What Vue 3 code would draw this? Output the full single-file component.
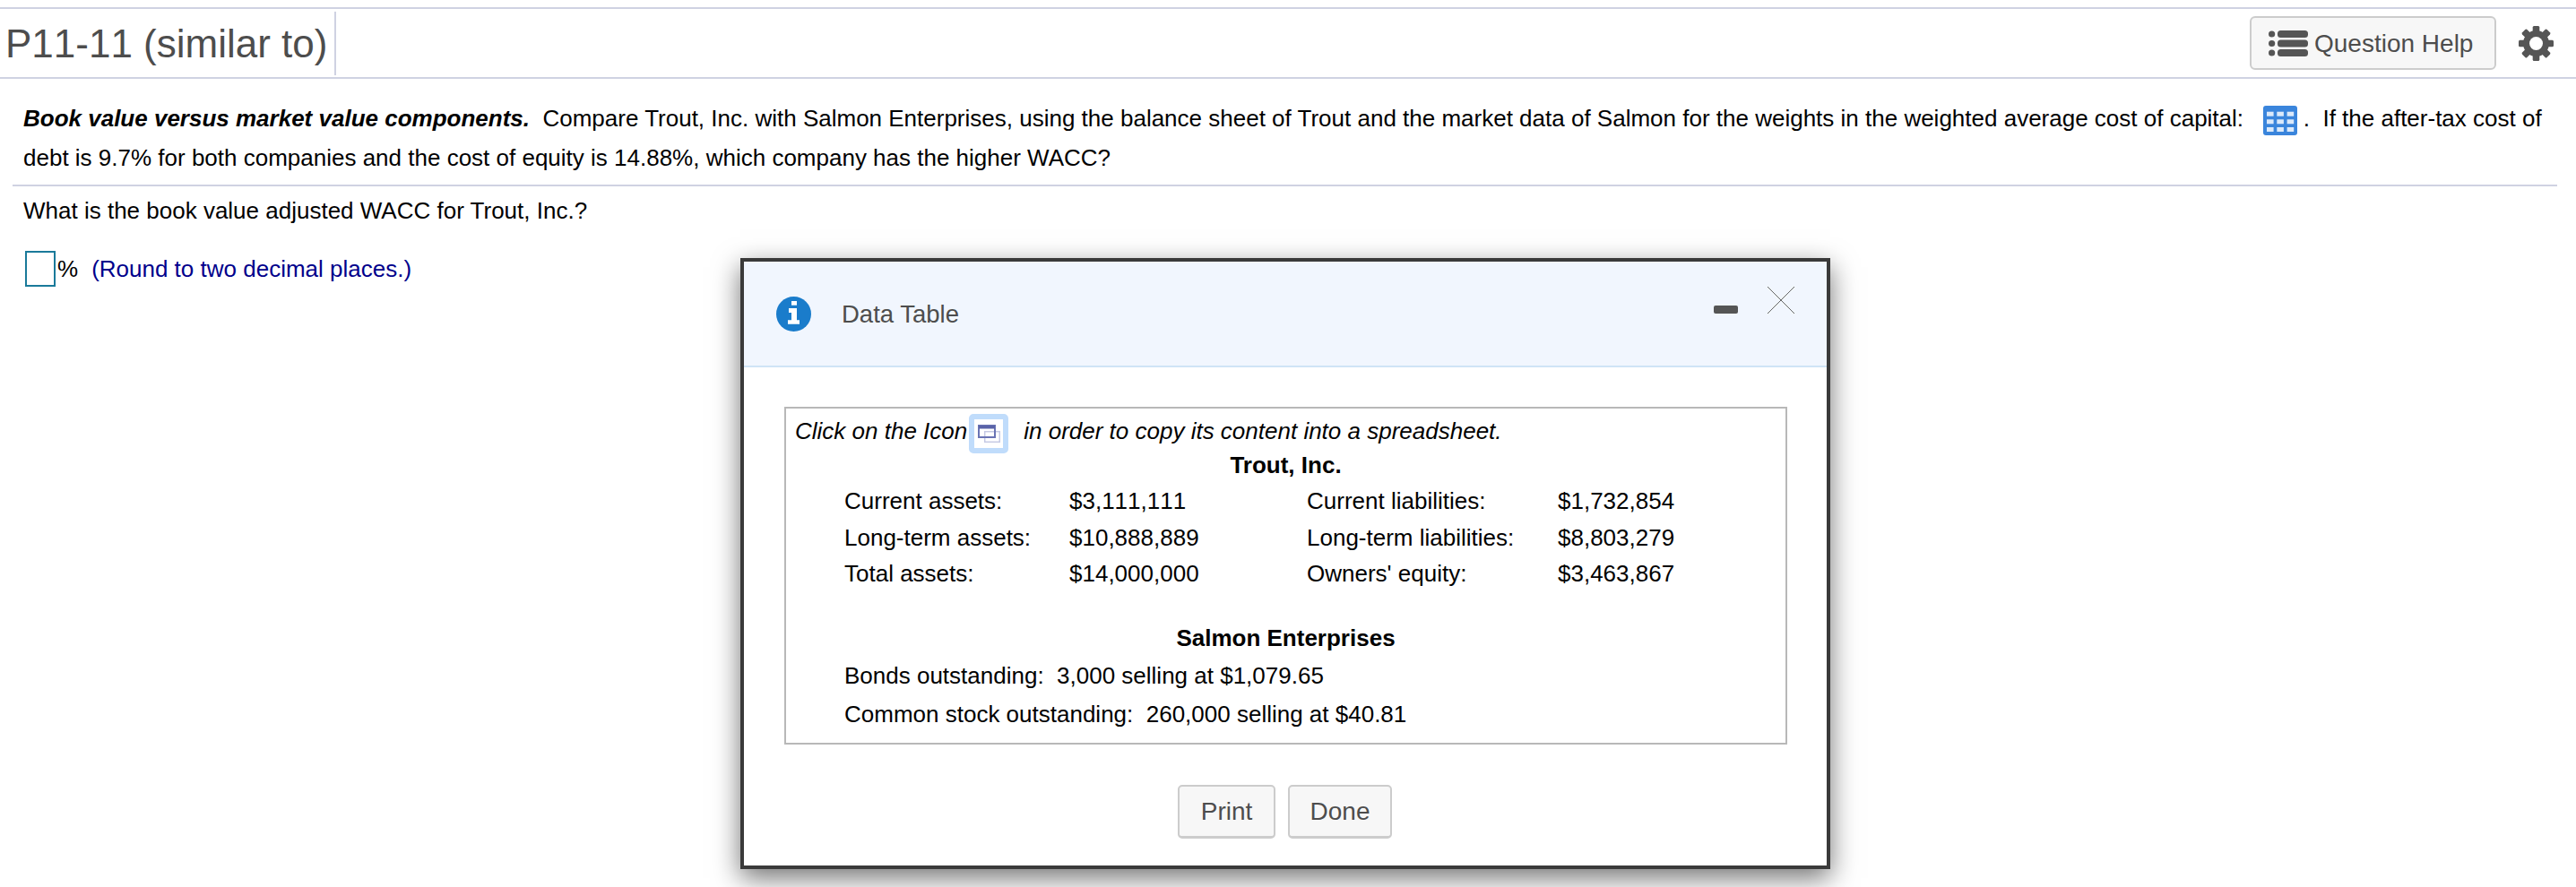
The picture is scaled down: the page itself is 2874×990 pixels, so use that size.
<template>
  <div class="page">
    <!-- Header -->
    <div class="hdr">
      <div class="hdr-title">P11-11 (similar to)</div>
      <div class="hdr-right">
        <button class="btn-help">
          <svg class="ico-list" width="44" height="29" viewBox="0 0 44 29">
            <circle cx="3.6" cy="4" r="3.6" />
            <circle cx="3.6" cy="14.5" r="3.6" />
            <circle cx="3.6" cy="25" r="3.6" />
            <rect x="10" y="0" width="34" height="8" rx="3.5" />
            <rect x="10" y="10.5" width="34" height="8" rx="3.5" />
            <rect x="10" y="21" width="34" height="8" rx="3.5" />
          </svg>
          <span>Question Help</span>
        </button>
        <svg class="ico-gear" width="39" height="39" viewBox="0 0 39 39">
          <rect v-for="a in teeth" :key="a" x="15.7" y="0" width="7.6" height="39" rx="1.5" :transform="`rotate(${a} 19.5 19.5)`" />
          <circle cx="19.5" cy="19.5" r="14.5" />
          <circle cx="19.5" cy="19.5" r="7.5" fill="#fff" />
        </svg>
      </div>
    </div>

    <!-- Question -->
    <div class="question">
      <p class="q-line"><b><i>Book value versus market value components.</i></b>&nbsp; Compare Trout, Inc. with Salmon Enterprises, using the balance sheet of Trout and the market data of Salmon for the weights in the weighted average cost of capital:&nbsp;
        <svg class="ico-table" width="38" height="33" viewBox="0 0 38 33">
          <rect width="38" height="33" rx="3" fill="#3a85dc" />
          <g fill="#dbe9fa">
            <template v-for="y in [6.7, 15.3, 24]" :key="y">
              <rect v-for="x in [4, 15.3, 26.6]" :key="x" :x="x" :y="y" width="7.6" height="5" />
            </template>
          </g>
        </svg>
        .&nbsp; If the after-tax cost of</p>
      <p class="q-line">debt is 9.7% for both companies and the cost of equity is 14.88%, which company has the higher WACC?</p>
    </div>
    <div class="sub">
      <p class="sub-q">What is the book value adjusted WACC for Trout, Inc.?</p>
      <div class="answer">
        <span class="ans-box"></span>
        <span class="pct">%</span>
        <span class="ans-note">(Round to two decimal places.)</span>
      </div>
    </div>

    <!-- Data table dialog -->
    <div class="dlg">
      <div class="dlg-hdr">
        <svg class="ico-info" width="39" height="39" viewBox="0 0 39 39">
          <circle cx="19.5" cy="19.5" r="19.5" fill="#1a7ccb" />
          <rect x="17" y="5" width="6" height="4.7" fill="#fff" />
          <path d="M14 13h9v13.3h3v4.4H13v-4.4h4v-8.3h-3z" fill="#fff" />
        </svg>
        <span class="dlg-title">Data Table</span>
        <span class="dlg-min"></span>
        <svg class="dlg-x" width="30" height="30" viewBox="0 0 30 30">
          <path d="M0 0L30 30M30 0L0 30" stroke="#666" stroke-width="1" fill="none" />
        </svg>
      </div>
      <div class="dlg-body">
        <div class="tbl-box">
          <div class="tbl-intro">
            <i>Click on the Icon</i>
            <span class="copy-btn">
              <svg width="25" height="20" viewBox="0 0 25 20">
                <rect x="7.7" y="7.7" width="16.6" height="11.6" fill="#fff" stroke="#c5c9e4" stroke-width="1.5" />
                <rect x="1" y="1" width="18" height="13" fill="none" stroke="#6a74b4" stroke-width="2" />
                <rect x="1" y="1" width="18" height="3.5" fill="#5a63a8" />
              </svg>
            </span>
            <i>in order to copy its content into a spreadsheet.</i>
          </div>
          <div class="tbl-head">Trout, Inc.</div>
          <div class="tbl-grid">
            <template v-for="r in rows" :key="r[0]">
              <span v-for="c in r" :key="c">{{ c }}</span>
            </template>
          </div>
          <div class="tbl-head2">Salmon Enterprises</div>
          <div class="tbl-line">Bonds outstanding:&nbsp; 3,000 selling at $1,079.65</div>
          <div class="tbl-line">Common stock outstanding:&nbsp; 260,000 selling at $40.81</div>
        </div>
        <div class="dlg-btns">
          <button class="btn btn-print">Print</button>
          <button class="btn btn-done">Done</button>
        </div>
      </div>
    </div>
  </div>
</template>

<script setup>
const teeth = [0, 45, 90, 135]
const rows = [
  ['Current assets:', '$3,111,111', 'Current liabilities:', '$1,732,854'],
  ['Long-term assets:', '$10,888,889', 'Long-term liabilities:', '$8,803,279'],
  ['Total assets:', '$14,000,000', "Owners' equity:", '$3,463,867'],
]
</script>

<style>
body { margin: 0; background: #fff; }
</style>

<style scoped>
.page {
  position: relative;
  width: 2874px;
  height: 990px;
  overflow: hidden;
  background: #fff;
  color: #000;
  font-family: "Liberation Sans", Arial, sans-serif;
  font-size: 26px;
}
p { margin: 0; }

/* Header */
.hdr {
  margin-top: 8px;
  height: 76px;
  border-top: 2px solid #cfd2e2;
  border-bottom: 2px solid #cfd2e2;
  display: flex;
  justify-content: space-between;
  align-items: center;
}
.hdr-title {
  height: 71px;
  line-height: 71px;
  padding: 0 8px 0 6px;
  font-size: 44px;
  font-kerning: none;
  color: #4d4d4d;
  border-right: 2px solid #cfd2e2;
}
.hdr-right { display: flex; align-items: center; gap: 25px; padding-right: 25px; }
.btn-help {
  width: 275px;
  height: 60px;
  display: flex;
  align-items: center;
  gap: 7px;
  padding: 1px 0 0 19px;
  box-sizing: border-box;
  border: 2px solid #ccc;
  border-radius: 6px;
  background: #f7f7f7;
  color: #4d4d4d;
  font: 28px "Liberation Sans", Arial, sans-serif;
}
.ico-list, .ico-gear { fill: #555; display: block; flex-shrink: 0; }

/* Question */
.question { padding: 22px 0 0 26px; white-space: nowrap; }
.q-line { height: 44px; line-height: 44px; }
.ico-table { vertical-align: middle; margin: 0 0 0 7px; }
.sub {
  margin: 8px 21px 0 14px;
  border-top: 2px solid #cfd2e2;
  padding: 5px 0 0 12px;
}
.sub-q { line-height: 44px; }
.answer { margin-top: 23px; display: flex; align-items: center; height: 40px; margin-left: 2px; }
.ans-box {
  width: 34px;
  height: 40px;
  box-sizing: border-box;
  border: 2px solid #1a7a9a;
}
.pct { margin-left: 2px; }
.ans-note { margin-left: 15px; color: #00008b; }

/* Dialog */
.dlg {
  position: absolute;
  left: 826px;
  top: 288px;
  width: 1216px;
  height: 682px;
  box-sizing: border-box;
  border: 4px solid #3a3a3a;
  background: #fff;
  box-shadow: 0 10px 28px rgba(0, 0, 0, 0.55);
}
.dlg-hdr {
  height: 118px;
  box-sizing: border-box;
  position: relative;
  background: #f1f6fe;
  border-bottom: 2px solid #cfe4f6;
  display: flex;
  align-items: center;
  padding: 0 0 0 36px;
}
.ico-info { flex-shrink: 0; }
.dlg-title { margin: 2px 0 0 34px; font-size: 27.5px; color: #4d4d4d; }
.dlg-min {
  position: absolute;
  left: 1082px;
  top: 49px;
  width: 27px;
  height: 9px;
  border-radius: 2px;
  background: #555;
}
.dlg-x { position: absolute; left: 1142px; top: 28px; }

.dlg-body { padding: 44px 44px 0 45px; }
.tbl-box {
  height: 377px;
  box-sizing: border-box;
  border: 2px solid #b8b8b8;
}
.tbl-intro {
  height: 50px;
  display: flex;
  align-items: center;
  padding-left: 10px;
  white-space: nowrap;
}
.copy-btn {
  width: 44px;
  height: 44px;
  margin: 6px 17px 0 2px;
  box-sizing: border-box;
  border: 6px solid #c0dcfb;
  border-radius: 5px;
  background: #fff;
  display: flex;
  align-items: center;
  justify-content: center;
  align-self: flex-start;
}
.tbl-head {
  line-height: 26px;
  text-align: center;
  font-weight: 700;
}
.tbl-grid {
  margin-top: 7px;
  padding-left: 65px;
  display: grid;
  grid-template-columns: 251px 265px 280px auto;
  grid-auto-rows: 40.5px;
  line-height: 40.5px;
}
.tbl-grid span:nth-child(4n+2) { font-kerning: none; }
.tbl-head2 {
  margin-top: 36px;
  line-height: 30px;
  text-align: center;
  font-weight: 700;
}
.tbl-line { padding-left: 65px; line-height: 43px; }
.tbl-head2 + .tbl-line { margin-top: 6px; }

.dlg-btns {
  margin-top: 45px;
  display: flex;
  justify-content: center;
  gap: 14px;
  padding-right: 2px;
}
.btn {
  height: 60px;
  box-sizing: border-box;
  border: 2px solid #ccc;
  border-bottom-width: 3px;
  border-radius: 5px;
  background: #f7f7f7;
  color: #4d4d4d;
  font: 28px "Liberation Sans", Arial, sans-serif;
  padding: 1px 0 0;
}
.btn-print { width: 109px; }
.btn-done { width: 116px; }
</style>
